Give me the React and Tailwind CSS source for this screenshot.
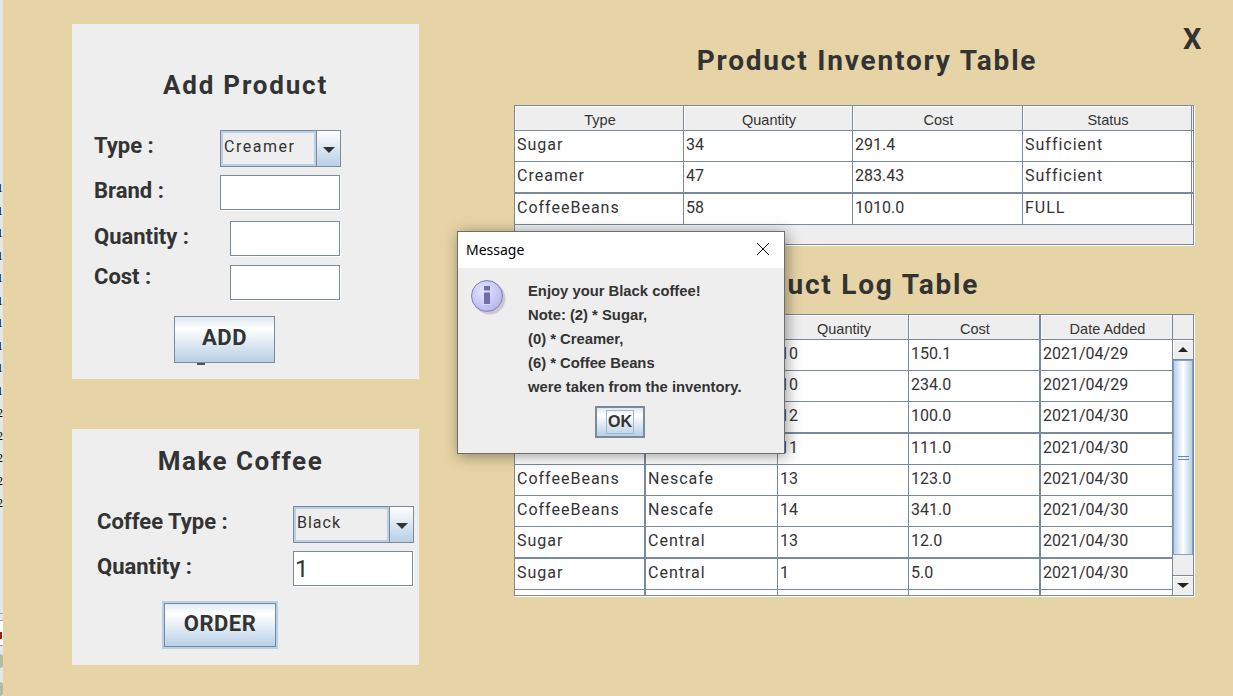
import React from "react";

const FONT = "font-['Roboto',sans-serif]";

const stockRows = [
  { cells: ["Sugar", "34", "291.4", "Sufficient"] },
  { cells: ["Creamer", "47", "283.43", "Sufficient"], thick: true },
  { cells: ["CoffeeBeans", "58", "1010.0", "FULL"] },
];

const logRows = [
  { cells: ["", "", "10", "150.1", "2021/04/29"] },
  { cells: ["", "", "10", "234.0", "2021/04/29"] },
  { cells: ["", "", "12", "100.0", "2021/04/30"], thick: true },
  { cells: ["", "", "11", "111.0", "2021/04/30"] },
  { cells: ["CoffeeBeans", "Nescafe", "13", "123.0", "2021/04/30"] },
  { cells: ["CoffeeBeans", "Nescafe", "14", "341.0", "2021/04/30"] },
  { cells: ["Sugar", "Central", "13", "12.0", "2021/04/30"], thick: true },
  { cells: ["Sugar", "Central", "1", "5.0", "2021/04/30"] },
  { cells: ["", "", "", "", ""] },
];

const stockCols = ["w-[169px] border-r", "w-[169px] border-r", "w-[170px] border-r", "w-[169px] border-r"];
const logCols = ["w-[131px] border-r-2", "w-[132px] border-r", "w-[131px] border-r", "w-[132px] border-r-2", "w-[132px] border-r"];

const stripNumbers = ["1", "1", "1", "1", "1", "1", "1", "1", "1", "1", "2", "2", "2", "2", "2"];

// Scraps of the window behind, visible down the left edge
const LeftStrip = () => (
  <div className="flex flex-col w-[3px] h-full shrink-0 overflow-hidden bg-[#e6e6e6]">
    <div className="h-[176px] shrink-0"></div>
    {stripNumbers.map((n, i) => (
      <div key={i} className="flex justify-end h-[22.5px] shrink-0 font-['Liberation_Serif',serif] text-[12px] leading-[24px] text-black">
        <span className="shrink-0">{n}</span>
      </div>
    ))}
    <div className="h-[100px] shrink-0 border-b border-[#a0a0a0]"></div>
    <div className="h-[7px] shrink-0 border-b border-[#a0a0a0]"></div>
    <div className="h-[24px] shrink-0 bg-white flex items-center">
      <div className="w-[2px] h-[7px] mt-[6px] bg-[#a02000]"></div>
    </div>
    <div className="h-[1px] shrink-0 bg-[#a0a0a0]"></div>
    <div className="h-[8px] shrink-0"></div>
    <div className="h-[14px] w-[3px] shrink-0 rounded-r-full bg-[#b9b9a0]"></div>
    <div className="h-[14px] shrink-0"></div>
    <div className="h-[14px] w-[3px] shrink-0 rounded-r-full bg-[#b9b9a0]"></div>
  </div>
);

const Label = ({ children, className }) => (
  <span className={`${FONT} font-bold text-[22px] leading-none text-[#333] ${className}`}>{children}</span>
);

const TextBox = ({ className, children }) => (
  <div className={`flex items-center h-[35px] bg-white border border-[#7a8a99] shadow-[1px_1px_0_#fff] ${className}`}>
    {children}
  </div>
);

const Combo = ({ value, textClass }) => (
  <div className="flex w-[121px] h-[37px] border border-[#7a8a99] bg-[#eeeeee]">
    <div className={`flex-1 border-2 border-[#b8cfe5] pl-[1px] ${FONT} text-[16px] text-[#333] ${textClass}`}>
      {value}
    </div>
    <div className="flex items-center justify-center w-[24px] border-l border-[#7a8a99] bg-linear-to-b from-white to-[#b8cfe5]">
      <div className="w-0 h-0 mt-[3px] border-x-[6px] border-x-transparent border-t-[6px] border-t-[#333]"></div>
    </div>
  </div>
);

const HeaderCell = ({ className, children }) => (
  <div className={`flex items-end justify-center pl-[2px] border-[#7a8a99] shadow-[inset_1px_1px_0_#fff] font-['Liberation_Sans',sans-serif] text-[14.5px] leading-[20px] text-[#333] ${className}`}>
    {children}
  </div>
);

// Numbers and dates sit tighter than the words in the reference
const Row = ({ cells, cols, thick }) => (
  <div className={`flex shrink-0 bg-white border-[#7a8a99] ${thick ? "h-[32px] border-b-2" : "h-[31px] border-b"}`}>
    {cells.map((c, i) => (
      <div
        key={i}
        className={`h-[30px] pl-[2px] border-[#7a8a99] ${FONT} text-[16px] leading-[27px] text-[#333] ${/^\d/.test(c) ? "tracking-[0px]" : "tracking-[1px]"} ${cols[i]}`}
      >
        {c}
      </div>
    ))}
  </div>
);

const Scrollbar = () => (
  <div className="flex flex-col flex-1 w-[20px] shrink-0">
    <div className="flex items-center justify-center h-[20px] shrink-0 bg-[#eeeeee] border-b border-[#7a8a99] shadow-[inset_1px_1px_0_#fff]">
      <div className="w-0 h-0 border-x-[5px] border-x-transparent border-b-[5px] border-b-[#222]"></div>
    </div>
    <div className="flex flex-col items-center justify-center gap-[2px] h-[195px] shrink-0 border border-[#7f9fd0] bg-linear-to-r from-[#b8cfe5] via-white to-[#b8cfe5]">
      <div className="w-[11px] h-[1px] bg-[#6382bf]"></div>
      <div className="w-[11px] h-[1px] bg-[#6382bf]"></div>
    </div>
    <div className="flex-1 bg-[#eeeeee]"></div>
    <div className="flex items-center justify-center h-[20px] shrink-0 bg-[#eeeeee] border-t border-[#7a8a99] shadow-[inset_1px_1px_0_#fff]">
      <div className="w-0 h-0 border-x-[6px] border-x-transparent border-t-[5px] border-t-[#222]"></div>
    </div>
  </div>
);

const AddProduct = () => (
  <section className="relative flex flex-col h-[355px] bg-[#eeeeee]">
    <h2 className={`mt-[46px] text-center ${FONT} font-bold text-[26px] leading-[30px] tracking-[1.8px] text-[#333]`}>
      Add Product
    </h2>
    <div className="flex items-center mt-[30px] ml-[22px]">
      <Label className="w-[126px] mb-[6px]">Type :</Label>
      <Combo value="Creamer" textClass="leading-[27px] tracking-[1.5px]" />
    </div>
    <div className="flex items-center mt-[8px] ml-[22px]">
      <Label className="w-[126px] mb-[4px]">Brand :</Label>
      <TextBox className="w-[120px]" />
    </div>
    <div className="flex items-center mt-[11px] ml-[22px]">
      <Label className="w-[136px] mb-[3px]">Quantity :</Label>
      <TextBox className="w-[110px]" />
    </div>
    <div className="flex items-center mt-[9px] ml-[22px]">
      <Label className="w-[136px] mb-[11px]">Cost :</Label>
      <TextBox className="w-[110px]" />
    </div>
    <button className={`w-[101px] h-[47px] mt-[16px] ml-[102px] pb-[4px] border border-[#7a8a99] bg-linear-to-b from-[#dde8f3] via-white via-25% to-[#b8cfe5] ${FONT} font-bold text-[22px] tracking-[0.5px] text-[#333]`}>
      ADD
    </button>
    <span className="absolute left-[125px] top-[339px] w-[8px] h-[2px] bg-[#555]"></span>
  </section>
);

const MakeCoffee = () => (
  <section className="flex flex-col h-[236px] bg-[#eeeeee]">
    <h2 className={`mt-[17px] ml-[-10px] text-center ${FONT} font-bold text-[26px] leading-[30px] tracking-[1.5px] text-[#333]`}>
      Make Coffee
    </h2>
    <div className="flex items-center mt-[30px] ml-[25px]">
      <Label className="w-[196px] mb-[5px]">Coffee Type :</Label>
      <Combo value="Black" textClass="leading-[28px] tracking-[1px]" />
    </div>
    <div className="flex items-center mt-[8px] ml-[25px]">
      <Label className="w-[196px] mb-[4px]">Quantity :</Label>
      <TextBox className="w-[120px] pl-[1px]">
        <span className={`${FONT} text-[24px] text-[#333]`}>1</span>
      </TextBox>
    </div>
    <button className={`w-[116px] h-[48px] mt-[15px] ml-[90px] pb-[4px] border-2 border-[#b8cfe5] outline outline-1 -outline-offset-3 outline-[#7a8a99] bg-linear-to-b from-[#dde8f3] via-white via-25% to-[#b8cfe5] ${FONT} font-bold text-[22px] tracking-[0.5px] text-[#333]`}>
      ORDER
    </button>
  </section>
);

const StockTable = () => (
  <div className="flex flex-col h-[140px] mt-[28px] border border-[#7a8a99] bg-[#eeeeee] shadow-[1px_1px_0_#fff]">
    <div className="flex h-[25px] shrink-0 border-b border-[#7a8a99]">
      <HeaderCell className={stockCols[0]}>Type</HeaderCell>
      <HeaderCell className={stockCols[1]}>Quantity</HeaderCell>
      <HeaderCell className={stockCols[2]}>Cost</HeaderCell>
      <HeaderCell className={stockCols[3]}>Status</HeaderCell>
    </div>
    {stockRows.map((r, i) => (
      <Row key={i} cells={r.cells} cols={stockCols} thick={r.thick} />
    ))}
  </div>
);

const LogTable = () => (
  <div className="flex h-[282px] mt-[13px] border border-[#7a8a99] bg-[#eeeeee] shadow-[1px_1px_0_#fff]">
    <div className="flex flex-col w-[658px] shrink-0 overflow-hidden">
      <div className="flex h-[25px] shrink-0 border-b border-[#7a8a99]">
        <HeaderCell className={logCols[0]}></HeaderCell>
        <HeaderCell className={logCols[1]}></HeaderCell>
        <HeaderCell className={logCols[2]}>Quantity</HeaderCell>
        <HeaderCell className={logCols[3]}>Cost</HeaderCell>
        <HeaderCell className={logCols[4]}>Date Added</HeaderCell>
      </div>
      {logRows.map((r, i) => (
        <Row key={i} cells={r.cells} cols={logCols} thick={r.thick} />
      ))}
    </div>
    <div className="flex flex-col flex-1">
      <div className="h-[25px] shrink-0 border-b border-[#7a8a99]"></div>
      <Scrollbar />
    </div>
  </div>
);

const InfoIcon = () => (
  <svg width="36" height="36" viewBox="0 0 36 36" className="shrink-0">
    <defs>
      <radialGradient id="infoFill" cx="0.4" cy="0.35" r="0.7">
        <stop offset="0" stopColor="#e6e6ff" />
        <stop offset="1" stopColor="#b4b4ee" />
      </radialGradient>
    </defs>
    <circle cx="18.5" cy="18.5" r="16" fill="#000" opacity="0.15" />
    <circle cx="16" cy="16" r="15.5" fill="url(#infoFill)" stroke="#8080b8" />
    <rect x="13" y="6" width="6" height="4.5" fill="#6e6ea8" />
    <rect x="13" y="12.5" width="6" height="13" fill="#6e6ea8" />
    <rect x="11.5" y="24" width="9" height="1.5" fill="#d8d8f5" />
  </svg>
);

const MessageDialog = () => (
  <div className="absolute left-[457px] top-[231px] flex flex-col w-[328px] h-[223px] border border-[#6e6e6e] bg-[#eeeeee] shadow-[2px_2px_14px_rgba(0,0,0,0.4)]">
    <div className="flex items-center justify-between h-[36px] shrink-0 bg-white pb-[2px] pl-[8px] pr-[14px]">
      <span className="font-['Noto_Sans',sans-serif] text-[14px] text-black">Message</span>
      <svg width="14" height="14" viewBox="0 0 14 14" stroke="#111" strokeWidth="1" fill="none">
        <path d="M1 1 L13 13 M13 1 L1 13" />
      </svg>
    </div>
    <div className="flex pl-[13px] pt-[12px]">
      <InfoIcon />
      <div className="ml-[21px] mt-[-1px] font-['Liberation_Sans',sans-serif] font-bold text-[14.8px] leading-[24px] text-[#333]">
        <p>Enjoy your Black coffee!</p>
        <p>Note: (2) * Sugar,</p>
        <p>(0) * Creamer,</p>
        <p>(6) * Coffee Beans</p>
        <p>were taken from the inventory.</p>
      </div>
    </div>
    <button className="flex items-center justify-center self-center w-[50px] h-[32px] mt-[7px] ml-[-2px] border-2 border-[#7a8a99] bg-linear-to-b from-[#dde8f3] via-white via-25% to-[#b8cfe5] font-['Liberation_Sans',sans-serif] font-bold text-[16px] text-[#333]">
      <span className="px-[1px] leading-[22px] border border-[#a3b8cc]">OK</span>
    </button>
  </div>
);

const App = () => {
  return (
    <div className="relative flex w-[1233px] h-[696px] overflow-hidden bg-[#e6d4a6]">
      <LeftStrip />
      <div className="flex flex-col gap-[50px] w-[347px] shrink-0 ml-[69px] pt-[24px]">
        <AddProduct />
        <MakeCoffee />
      </div>
      <div className="flex flex-col w-[680px] shrink-0 ml-[95px] pt-[44px]">
        <h1 className={`text-center ml-[26px] ${FONT} font-bold text-[28px] leading-[33px] tracking-[1.8px] text-[#333]`}>
          Product Inventory Table
        </h1>
        <StockTable />
        <h1 className={`mt-[23px] ml-[-8px] text-center ${FONT} font-bold text-[28px] leading-[33px] tracking-[1.8px] text-[#333]`}>
          Product Log Table
        </h1>
        <LogTable />
      </div>
      <div className={`ml-[-11px] pt-[22px] ${FONT} font-bold text-[29px] leading-[34px] text-[#333]`}>X</div>
      <MessageDialog />
    </div>
  );
};

export default App;
